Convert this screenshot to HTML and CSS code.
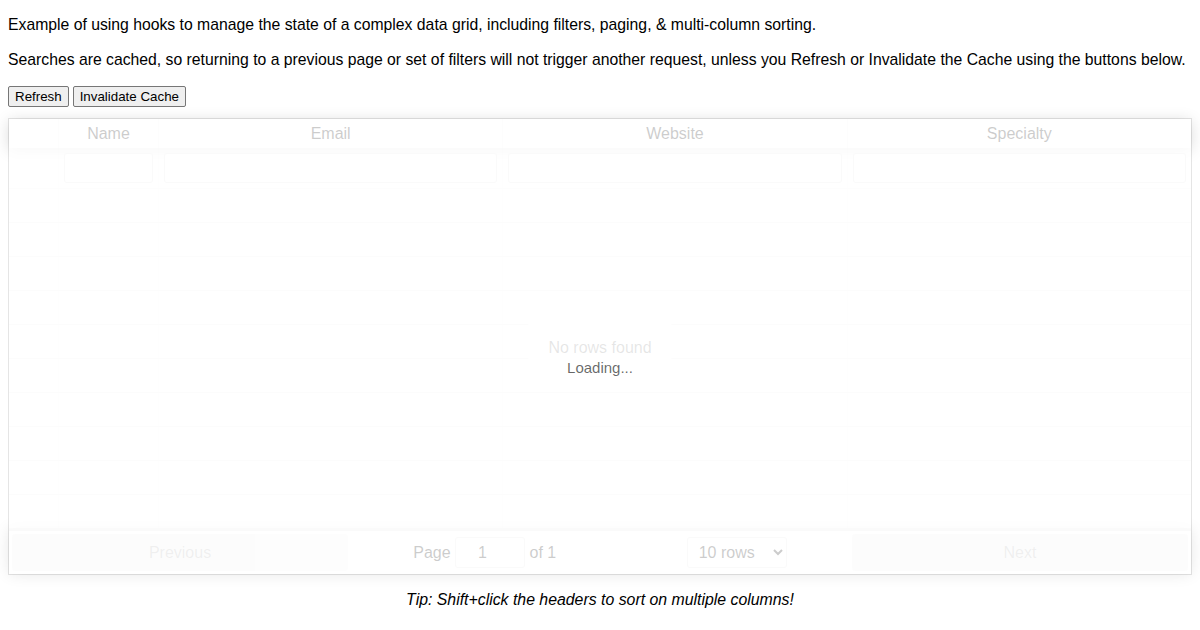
FILE: index.html
```html
<!DOCTYPE html>
<html>
<head>
<meta charset="utf-8">
<link rel="stylesheet" href="styles.css">
</head>
<body>
<p class="intro">Example of using hooks to manage the state of a complex data grid, including filters, paging, &amp; multi-column sorting.</p>
<p class="intro">Searches are cached, so returning to a previous page or set of filters will not trigger another request, unless you Refresh or Invalidate the Cache using the buttons below.</p>
<div class="actions"><button class="act">Refresh</button><button class="act">Invalidate Cache</button></div>
<div class="rt">
  <div class="rt-table">
    <div class="thead header">
      <div class="tr">
        <div class="th c-sel"></div>
        <div class="th c-name">Name</div>
        <div class="th c-flex">Email</div>
        <div class="th c-flex">Website</div>
        <div class="th c-flex">Specialty</div>
      </div>
    </div>
    <div class="thead filters">
      <div class="tr">
        <div class="th c-sel"></div>
        <div class="th c-name"><input class="finput" type="text"></div>
        <div class="th c-flex"><input class="finput" type="text"></div>
        <div class="th c-flex"><input class="finput" type="text"></div>
        <div class="th c-flex"><input class="finput" type="text"></div>
      </div>
    </div>
    <div class="tbody">
      <div class="tr-group"><div class="tr"><div class="td c-sel">&nbsp;</div><div class="td c-name">&nbsp;</div><div class="td c-flex">&nbsp;</div><div class="td c-flex">&nbsp;</div><div class="td c-flex">&nbsp;</div></div></div>
      <div class="tr-group"><div class="tr"><div class="td c-sel">&nbsp;</div><div class="td c-name">&nbsp;</div><div class="td c-flex">&nbsp;</div><div class="td c-flex">&nbsp;</div><div class="td c-flex">&nbsp;</div></div></div>
      <div class="tr-group"><div class="tr"><div class="td c-sel">&nbsp;</div><div class="td c-name">&nbsp;</div><div class="td c-flex">&nbsp;</div><div class="td c-flex">&nbsp;</div><div class="td c-flex">&nbsp;</div></div></div>
      <div class="tr-group"><div class="tr"><div class="td c-sel">&nbsp;</div><div class="td c-name">&nbsp;</div><div class="td c-flex">&nbsp;</div><div class="td c-flex">&nbsp;</div><div class="td c-flex">&nbsp;</div></div></div>
      <div class="tr-group"><div class="tr"><div class="td c-sel">&nbsp;</div><div class="td c-name">&nbsp;</div><div class="td c-flex">&nbsp;</div><div class="td c-flex">&nbsp;</div><div class="td c-flex">&nbsp;</div></div></div>
      <div class="tr-group"><div class="tr"><div class="td c-sel">&nbsp;</div><div class="td c-name">&nbsp;</div><div class="td c-flex">&nbsp;</div><div class="td c-flex">&nbsp;</div><div class="td c-flex">&nbsp;</div></div></div>
      <div class="tr-group"><div class="tr"><div class="td c-sel">&nbsp;</div><div class="td c-name">&nbsp;</div><div class="td c-flex">&nbsp;</div><div class="td c-flex">&nbsp;</div><div class="td c-flex">&nbsp;</div></div></div>
      <div class="tr-group"><div class="tr"><div class="td c-sel">&nbsp;</div><div class="td c-name">&nbsp;</div><div class="td c-flex">&nbsp;</div><div class="td c-flex">&nbsp;</div><div class="td c-flex">&nbsp;</div></div></div>
      <div class="tr-group"><div class="tr"><div class="td c-sel">&nbsp;</div><div class="td c-name">&nbsp;</div><div class="td c-flex">&nbsp;</div><div class="td c-flex">&nbsp;</div><div class="td c-flex">&nbsp;</div></div></div>
      <div class="tr-group"><div class="tr"><div class="td c-sel">&nbsp;</div><div class="td c-name">&nbsp;</div><div class="td c-flex">&nbsp;</div><div class="td c-flex">&nbsp;</div><div class="td c-flex">&nbsp;</div></div></div>
    </div>
  </div>
  <div class="pagination">
    <div class="pg-side"><button class="pg-btn" disabled>Previous</button></div>
    <div class="pg-center">
      <span class="page-info">Page <span class="page-jump"><input class="pg-input" type="number" value="1"></span> of <span>1</span></span>
      <span class="size-wrap"><select class="pg-select"><option>10 rows</option></select></span>
    </div>
    <div class="pg-side"><button class="pg-btn" disabled>Next</button></div>
  </div>
  <div class="nodata">No rows found</div>
  <div class="loading"><div class="loading-inner">Loading...</div></div>
</div>
<p class="tip">Tip: Shift+click the headers to sort on multiple columns!</p>
</body>
</html>
```
FILE: styles.css
```css
html, body {
  margin: 0;
  padding: 0;
  background: #fff;
}
body {
  padding: 15px 8px 0;
  font-family: "Liberation Sans", Arial, sans-serif;
  font-size: 15.75px;
  color: #000;
}
.intro {
  margin: 0 0 16px;
  line-height: 19px;
}
.intro + .intro {
  margin-bottom: 17px;
}
.actions {
  display: flex;
  gap: 4px;
  margin-bottom: 11px;
}
.act {
  font-family: "Liberation Sans", Arial, sans-serif;
  font-size: 13.33px;
  padding: 1px 6px;
  border: 1px solid #767676;
  border-radius: 2px;
  background: #efefef;
  color: #000;
  height: 21px;
  line-height: 17px;
}
.rt {
  position: relative;
  display: flex;
  flex-direction: column;
  border: 1px solid rgba(0,0,0,0.1);
  font-size: 16px;
  line-height: 19px;
}
.rt-table {
  display: flex;
  flex-direction: column;
  align-items: stretch;
  width: 100%;
}
.thead {
  display: flex;
  flex-direction: column;
}
.thead.header {
  box-shadow: 0 2px 15px 0 rgba(0,0,0,0.15);
}
.thead.filters {
  border-bottom: 1px solid rgba(0,0,0,0.05);
}
.tr {
  display: flex;
  text-align: center;
}
.th {
  padding: 5px;
  border-right: 1px solid rgba(0,0,0,0.05);
  overflow: hidden;
  white-space: nowrap;
  box-sizing: border-box;
}
.filters .th {
  border-right: 1px solid rgba(0,0,0,0.02);
}
.th:last-child, .td:last-child {
  border-right: 0;
}
.c-sel { flex: 0 0 50px; }
.c-name { flex: 0 0 100px; }
.c-flex { flex: 1 1 0; min-width: 0; }
.finput {
  display: block;
  width: 100%;
  box-sizing: border-box;
  border: 1px solid rgba(0,0,0,0.1);
  background: #fff;
  padding: 5px 7px;
  font: inherit;
  line-height: 18px;
  height: 30px;
  border-radius: 3px;
  outline: none;
}
.tbody {
  display: flex;
  flex-direction: column;
}
.tr-group {
  border-bottom: 1px solid rgba(0,0,0,0.06);
}
.td {
  padding: 7px 5px;
  border-right: 1px solid rgba(0,0,0,0.02);
  box-sizing: border-box;
  white-space: nowrap;
  overflow: hidden;
}
.pagination {
  display: flex;
  justify-content: space-between;
  align-items: stretch;
  padding: 3px;
  box-shadow: 0 0 15px 0 rgba(0,0,0,0.1);
  border-top: 2px solid rgba(0,0,0,0.1);
}
.pg-side {
  flex: 1;
  text-align: center;
}
.pg-btn {
  display: block;
  width: 100%;
  height: 100%;
  border: 0;
  border-radius: 3px;
  padding: 6px;
  font: inherit;
  color: rgba(0,0,0,0.6);
  background: rgba(0,0,0,0.1);
  opacity: 0.5;
}
.pg-center {
  flex: 1.5;
  display: flex;
  align-items: center;
  justify-content: space-around;
  text-align: center;
}
.page-info {
  display: inline-block;
  margin: 3px 10px;
  white-space: nowrap;
}
.page-jump {
  display: inline-block;
}
.pg-input {
  width: 70px;
  box-sizing: border-box;
  text-align: center;
  border: 1px solid rgba(0,0,0,0.1);
  background: #fff;
  padding: 5px 7px;
  font: inherit;
  height: 31px;
  border-radius: 3px;
  outline: none;
}
.size-wrap {
  margin: 3px 10px;
}
.pg-select {
  width: 100px;
  height: 31px;
  border: 1px solid rgba(0,0,0,0.1);
  background: #fff;
  padding: 5px 7px;
  font: inherit;
  border-radius: 3px;
  outline: none;
  color: #000;
}
.nodata {
  position: absolute;
  left: 50%;
  top: 50%;
  transform: translate(-50%, -50%);
  background: rgba(255,255,255,0.8);
  padding: 20px;
  color: rgba(0,0,0,0.5);
  z-index: 1;
}
.loading {
  position: absolute;
  left: 0;
  right: 0;
  top: 0;
  bottom: 0;
  background: rgba(255,255,255,0.8);
  z-index: 2;
}
.loading-inner {
  position: absolute;
  left: 0;
  width: 100%;
  top: 240px;
  text-align: center;
  font-size: 15px;
  line-height: 17px;
  color: rgba(0,0,0,0.6);
}
.tip {
  margin: 15px 0 0;
  text-align: center;
  font-style: italic;
  font-size: 15.85px;
  line-height: 20px;
}
```
